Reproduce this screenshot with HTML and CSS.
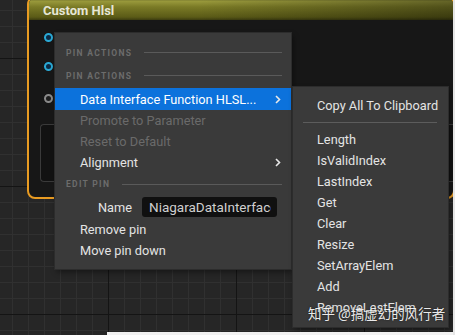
FILE: index.html
```html
<!DOCTYPE html>
<html lang="en">
<head>
  <meta charset="UTF-8" />
  <title>Custom Hlsl pin menu</title>
  <link rel="stylesheet" href="styles.css">
</head>
<body>

  <div class="graph">

    <div class="node">
      <div class="node-title">Custom Hlsl</div>
      <div class="pins">
        <span class="pin blue"></span>
        <span class="pin blue second"></span>
        <span class="pin grey third"></span>
      </div>
      <div class="code-box"></div>
    </div>

    <div class="menu">
      <div class="menu-header"><span>PIN ACTIONS</span><i></i></div>
      <div class="menu-header"><span>PIN ACTIONS</span><i></i></div>
      <div class="menu-item active">
        Data Interface Function HLSL...
        <svg class="chevron" width="6" height="9" viewBox="0 0 6 9"><polyline points="1,1 4.5,4.5 1,8" /></svg>
      </div>
      <div class="menu-item disabled">Promote to Parameter</div>
      <div class="menu-item disabled">Reset to Default</div>
      <div class="menu-item">
        Alignment
        <svg class="chevron" width="6" height="9" viewBox="0 0 6 9"><polyline points="1,1 4.5,4.5 1,8" /></svg>
      </div>
      <div class="menu-header edit"><span>EDIT PIN</span><i></i></div>
      <div class="name-row">
        <label>Name</label>
        <div class="name-input"><div class="name-text">NiagaraDataInterface</div></div>
      </div>
      <div class="menu-item">Remove pin</div>
      <div class="menu-item">Move pin down</div>
    </div>

    <div class="submenu">
      <div class="menu-item">Copy All To Clipboard</div>
      <div class="separator"></div>
      <div class="menu-item">Length</div>
      <div class="menu-item">IsValidIndex</div>
      <div class="menu-item">LastIndex</div>
      <div class="menu-item">Get</div>
      <div class="menu-item">Clear</div>
      <div class="menu-item">Resize</div>
      <div class="menu-item">SetArrayElem</div>
      <div class="menu-item">Add</div>
      <div class="menu-item">RemoveLastElem</div>
    </div>

    <div class="watermark">知乎 @搞虚幻的风行者</div>
    <div class="bottom-panel"></div>
  </div>

</body>
</html>
```

FILE: styles.css
```css
body {
  margin: 0;
  width: 455px;
  height: 335px;
  overflow: hidden;
  background: #e6e6e6;
  font-family: Roboto, 'Liberation Sans', sans-serif;
  font-size: 12.75px;
  color: #e4e4e4;
}

/* node graph canvas */
.graph {
  position: relative;
  width: 453px;
  height: 335px;
  overflow: hidden;
  background-color: #262626;
  background-image:
    linear-gradient(to right, #141414 1px, transparent 1px),
    linear-gradient(to bottom, #141414 1px, transparent 1px),
    linear-gradient(to right, #303030 1px, transparent 1px),
    linear-gradient(to bottom, #303030 1px, transparent 1px);
  background-size: 128px 128px, 128px 128px, 16px 16px, 16px 16px;
  background-position: 108px 0, 0 58px, 12px 0, 0 10px;
}

.node {
  position: absolute;
  left: 27px;
  top: -4px;
  width: 424px;
  height: 199px;
  border: 2px solid #e89b22;
  border-radius: 8px;
  background: #171717;
  overflow: hidden;
}

.node-title {
  height: 22px;
  padding: 4px 0 0 14px;
  box-sizing: border-box;
  font-weight: bold;
  font-size: 13px;
  line-height: 17px;
  color: #e6e6d6;
  background:
    linear-gradient(to right, rgba(0, 0, 0, 0) 40%, rgba(0, 0, 0, 0.35) 100%),
    linear-gradient(to bottom, #3a3a14 0, #9a9a3c 3px, #7a7a26 9px, #5b5b17 19px, #3c3c10 22px);
}

.pins {
  display: flex;
  flex-direction: column;
  padding: 13px 0 0 15px;
}

.pin {
  width: 5px;
  height: 5px;
  border: 2px solid #2aa8d4;
  border-radius: 50%;
  background: #0c2a44;
}

.pin.second { margin-top: 20px; }
.pin.third {
  margin-top: 23px;
  border-color: #8a8a8a;
  background: #1c1c1c;
}

.code-box {
  margin: 21px 0 0 11px;
  height: 56px;
  border: 1px solid #3a3a3a;
  border-right: none;
  border-radius: 4px 0 0 4px;
  background: #121212;
}

/* context menus */
.menu,
.submenu {
  position: absolute;
  background: #3a3a3a;
  box-shadow: 0 0 0 1px #2c2c2c, 2px 3px 6px rgba(0, 0, 0, 0.45);
}

.menu {
  left: 55px;
  top: 33px;
  width: 236px;
  padding: 8px 0;
}

.submenu {
  left: 293px;
  top: 87px;
  width: 155px;
  padding: 8px 0 9px;
}

.menu-header {
  display: flex;
  align-items: center;
  height: 23px;
  padding: 0 9px 0 11px;
  font-size: 8.5px;
  font-weight: bold;
  letter-spacing: 1.3px;
  color: #6c6c6c;
}

.menu-header i {
  flex: 1;
  height: 1px;
  margin-left: 12px;
  background: #5a5a5a;
}

.menu-header.edit { height: 22px; }

.menu-item {
  display: flex;
  align-items: center;
  justify-content: space-between;
  height: 21px;
  padding: 0 10px 0 25px;
  white-space: nowrap;
}

.submenu .menu-item { padding-left: 24px; }

.menu-item.active {
  height: 22px;
  margin-top: 1px;
  background: #0c72dc;
  color: #ffffff;
}

.menu-item.disabled { color: #6a6a6a; }

.chevron polyline {
  fill: none;
  stroke: #e8e8e8;
  stroke-width: 1.6;
}

.name-row {
  display: flex;
  align-items: center;
  height: 24px;
  padding: 0 14px 0 43px;
}

.name-row label { width: 44px; }

.name-input {
  flex: 1;
  min-width: 0;
  height: 20px;
  line-height: 20px;
  padding: 0 6px 0 7px;
  border-radius: 3px;
  background: #101010;
  color: #cfcfcf;
  font-size: 13.5px;
}

.name-text {
  overflow: hidden;
  white-space: nowrap;
}

.separator {
  height: 1px;
  margin: 6px 11px 6px 10px;
  background: #5c5c5c;
}

.watermark {
  position: absolute;
  left: 308px;
  top: 304px;
  font-family: 'Noto Sans CJK SC', sans-serif;
  font-size: 13.5px;
  line-height: 18px;
  color: rgba(255, 255, 255, 0.92);
  text-shadow: 0 0 2px rgba(0, 0, 0, 0.6);
}

.bottom-panel {
  position: absolute;
  left: 107px;
  top: 332px;
  width: 346px;
  height: 3px;
  background: #f2f2f2;
}
```
